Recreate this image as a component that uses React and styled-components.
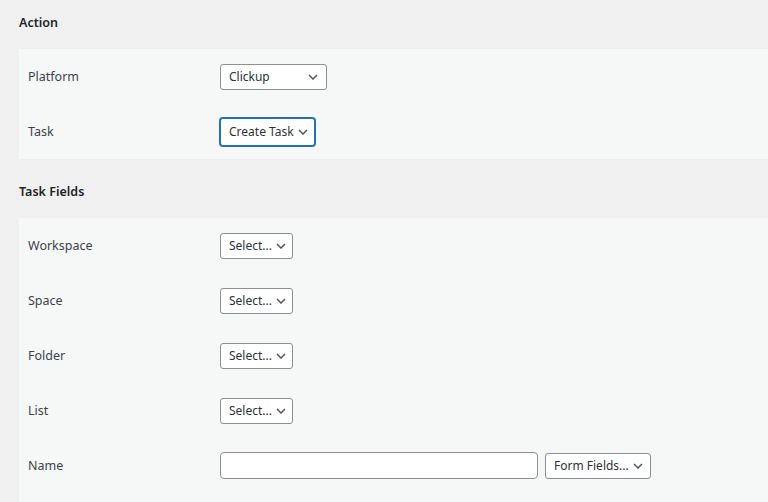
import React from "react";
import styled, { createGlobalStyle } from "styled-components";

const Global = createGlobalStyle`
  html, body { margin: 0; padding: 0; background: #f0f0f1; }
  body {
    font-family: "Noto Sans", "Open Sans", sans-serif;
    font-size: 13px;
    color: #3c434a;
    overflow: hidden;
  }
`;

const Page = styled.div`
  padding: 15px 0 0 19px;
`;

const Heading = styled.h2`
  margin: ${(p) => (p.$first ? "0" : "27px")} 0 18px;
  font-size: 12.5px;
  line-height: 16px;
  font-weight: 600;
  color: #1d2327;
`;

const Panel = styled.div`
  background: #f6f7f7;
  padding-left: 9px;
  padding-bottom: ${(p) => (p.$open ? "9px" : "0")};
`;

const Row = styled.div`
  display: flex;
  align-items: center;
  height: 55px;
  margin-bottom: ${(p) => (p.$tight ? "-2px" : "0")};
`;

const Label = styled.div`
  width: 192px;
  flex: none;
  font-size: 12.5px;
  color: #3c434a;
`;

const Controls = styled.div`
  display: flex;
  align-items: center;
  gap: 7px;
`;

const SelectBox = styled.div`
  box-sizing: border-box;
  display: flex;
  align-items: center;
  justify-content: space-between;
  gap: 4px;
  width: ${(p) => p.$w}px;
  height: ${(p) => (p.$focus ? 28 : 26)}px;
  padding: 0 8px;
  background: #fff;
  border: 1px solid ${(p) => (p.$focus ? "#2271b1" : "#8c8f94")};
  box-shadow: ${(p) => (p.$focus ? "0 0 0 1px #2271b1" : "none")};
  border-radius: 3px;
  color: #2c3338;
  font-size: 12px;
  white-space: nowrap;

  svg {
    flex: none;
  }
`;

const TextInput = styled.input`
  box-sizing: border-box;
  width: 318px;
  height: 27px;
  padding: 0 8px;
  background: #fff;
  border: 1px solid #8c8f94;
  border-radius: 4px;
  font: inherit;
  outline: none;
`;

const Chevron = () => (
  <svg width="10" height="6" viewBox="0 0 10 6" fill="none">
    <path d="M1 1l4 4 4-4" stroke="#50575e" strokeWidth="1.5" />
  </svg>
);

const Select = ({ value, width, focus }) => (
  <SelectBox $w={width} $focus={focus}>
    <span>{value}</span>
    <Chevron />
  </SelectBox>
);

const taskFields = ["Workspace", "Space", "Folder", "List"];

export default function App() {
  return (
    <>
      <Global />
      <Page>
        <Heading $first>Action</Heading>
        <Panel>
          <Row>
            <Label>Platform</Label>
            <Select value="Clickup" width={107} />
          </Row>
          <Row $tight>
            <Label>Task</Label>
            <Select value="Create Task" width={95} focus />
          </Row>
        </Panel>

        <Heading>Task Fields</Heading>
        <Panel $open>
          {taskFields.map((f) => (
            <Row key={f}>
              <Label>{f}</Label>
              <Select value="Select..." width={73} />
            </Row>
          ))}
          <Row>
            <Label>Name</Label>
            <Controls>
              <TextInput type="text" />
              <Select value="Form Fields..." width={106} />
            </Controls>
          </Row>
        </Panel>
      </Page>
    </>
  );
}
